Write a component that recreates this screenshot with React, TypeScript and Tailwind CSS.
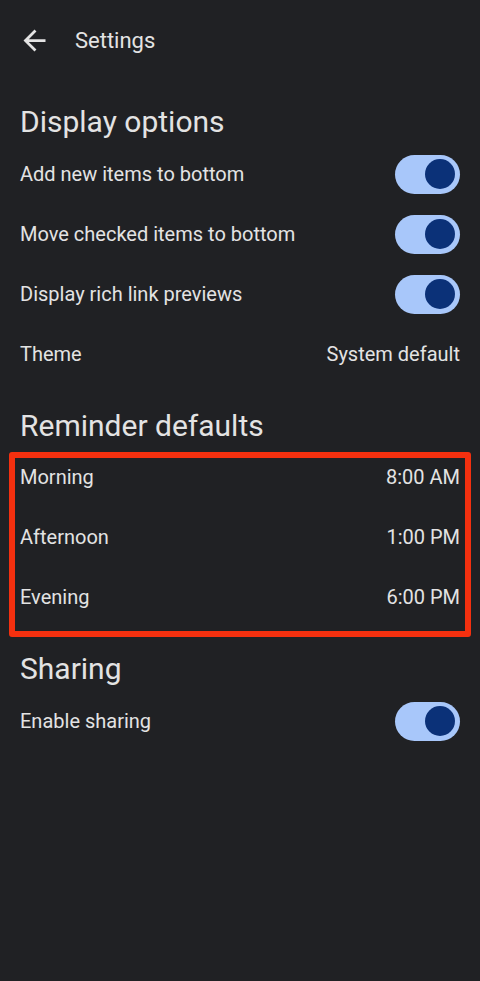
import { ReactNode } from "react";

const font = { fontFamily: "Roboto, 'Noto Sans', sans-serif" };

function Toggle() {
    return (
        <div className="flex h-[39px] w-[65px] items-center justify-end rounded-full bg-[#a8c7fa] pr-[5px]">
            <div className="h-[30px] w-[30px] rounded-full bg-[#0b3178]" />
        </div>
    );
}

function Row({ label, right }: { label: string; right: ReactNode }) {
    return (
        <div className="flex h-[60px] items-center justify-between px-5">
            <span className="text-[20px] text-[#e3e3e3]">{label}</span>
            {right}
        </div>
    );
}

function Heading({ children, className = "" }: { children: ReactNode; className?: string }) {
    return <h2 className={`px-5 pb-1 text-[30px] leading-[36px] text-[#e3e3e3] ${className}`}>{children}</h2>;
}

const reminders = [
    { label: "Morning", time: "8:00 AM" },
    { label: "Afternoon", time: "1:00 PM" },
    { label: "Evening", time: "6:00 PM" },
];

export default function App() {
    return (
        <div className="min-h-[981px] w-[480px] bg-[#202124]" style={font}>
            {/* top bar */}
            <div className="flex h-[80px] items-center gap-6 pl-[18px]">
                <svg width="33" height="33" viewBox="0 0 24 24" fill="#e3e3e3">
                    <path d="M20 11H7.83l5.59-5.59L12 4l-8 8 8 8 1.41-1.41L7.83 13H20v-2z" />
                </svg>
                <span className="text-[22px] text-[#e3e3e3]">Settings</span>
            </div>

            <Heading className="pt-6">Display options</Heading>
            <Row label="Add new items to bottom" right={<Toggle />} />
            <Row label="Move checked items to bottom" right={<Toggle />} />
            <Row label="Display rich link previews" right={<Toggle />} />
            <Row label="Theme" right={<span className="text-[20px] text-[#e3e3e3]">System default</span>} />

            <Heading className="pt-6">Reminder defaults</Heading>

            {/* highlighted block */}
            <div className="mx-[9px] mt-[4px] rounded-[3px] border-[6px] border-[#f4300f]">
                <div className="flex flex-col gap-[36px] pb-[22px] pl-[5px] pr-[5px] pt-[7px]">
                    {reminders.map((r) => (
                        <div key={r.label} className="flex h-[24px] items-center justify-between">
                            <span className="text-[20px] text-[#e3e3e3]">{r.label}</span>
                            <span className="text-[20px] text-[#e3e3e3]">{r.time}</span>
                        </div>
                    ))}
                </div>
            </div>

            <Heading className="mt-[14px]">Sharing</Heading>
            <Row label="Enable sharing" right={<Toggle />} />
        </div>
    );
}
